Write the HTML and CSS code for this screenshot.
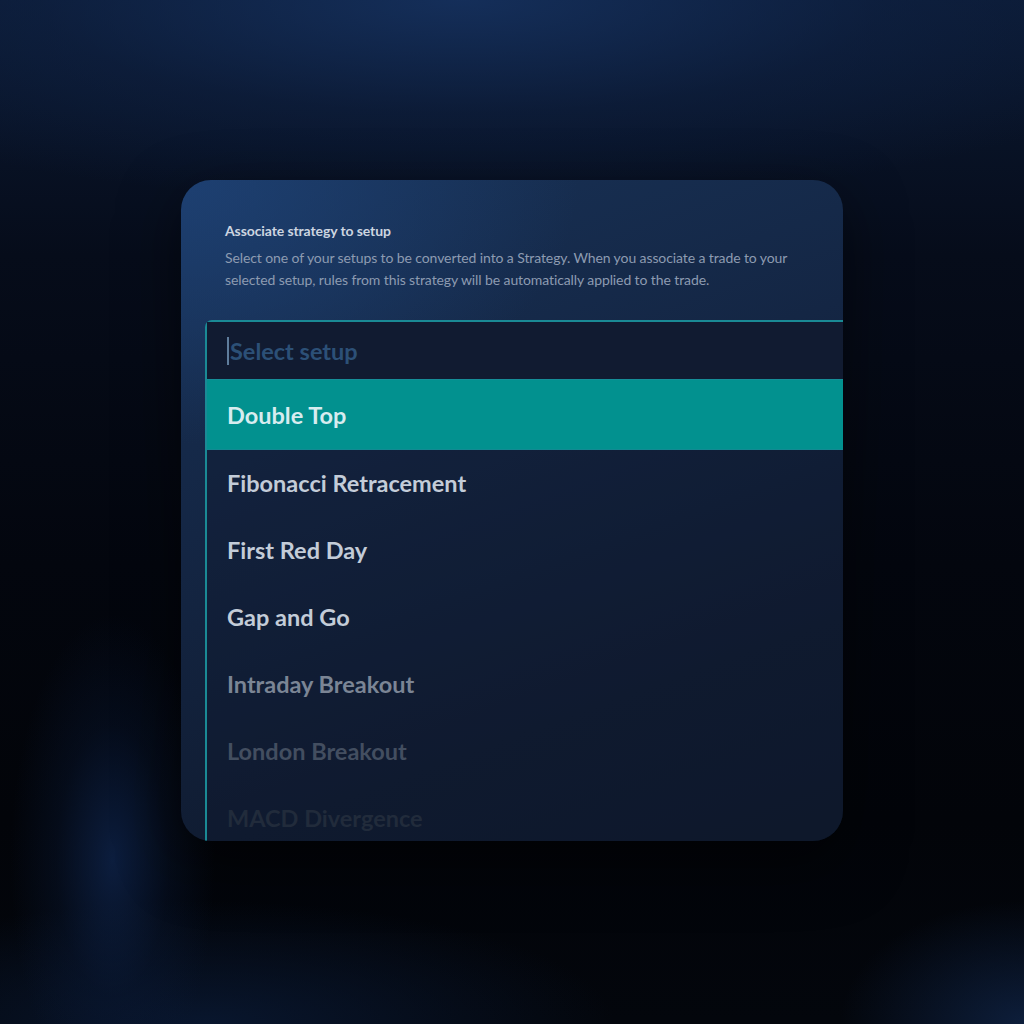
FILE: index.html
```html
<!DOCTYPE html>
<html lang="en">
<head>
<meta charset="utf-8">
<title>Associate strategy to setup</title>
<link rel="stylesheet" href="styles.css">
</head>
<body>
<div class="stage">
  <section class="card">
    <header class="intro">
      <h1 class="title">Associate strategy to setup</h1>
      <p class="desc">Select one of your setups to be converted into a Strategy. When you associate a trade to your selected setup, rules from this strategy will be automatically applied to the trade.</p>
    </header>
    <div class="select">
      <div class="select-input"><span class="caret"></span><span class="placeholder">Select setup</span></div>
      <ul class="options">
        <li class="option active">Double Top</li>
        <li class="option">Fibonacci Retracement</li>
        <li class="option">First Red Day</li>
        <li class="option">Gap and Go</li>
        <li class="option fade-1">Intraday Breakout</li>
        <li class="option fade-2">London Breakout</li>
        <li class="option fade-3">MACD Divergence</li>
      </ul>
    </div>
  </section>
</div>
</body>
</html>
```
FILE: styles.css
```css
* { box-sizing: border-box; }
html, body { margin: 0; padding: 0; }
body {
  width: 1024px;
  height: 1024px;
  overflow: hidden;
  font-family: "Source Sans Pro", Lato, "Noto Sans", sans-serif;
  background:
    radial-gradient(ellipse 75% 20% at 45% 0%, rgba(22, 50, 96, 0.85) 0%, rgba(16, 36, 72, 0.45) 55%, rgba(0,0,0,0) 100%),
    radial-gradient(ellipse 10% 24% at 11% 84%, rgba(16, 40, 84, 0.7) 0%, rgba(10, 26, 56, 0.35) 55%, rgba(0,0,0,0) 100%),
    radial-gradient(ellipse 40% 12% at 20% 100%, rgba(10, 26, 54, 0.8) 0%, rgba(0,0,0,0) 100%),
    radial-gradient(ellipse 18% 12% at 100% 100%, rgba(20, 46, 90, 0.6) 0%, rgba(0,0,0,0) 100%),
    linear-gradient(180deg, #0b1a34 0%, #060c1a 25%, #03060e 55%, #020409 80%, #03060c 100%);
}
.stage {
  display: flex;
  justify-content: flex-start;
  padding: 180px 0 0 181px;
}
.card {
  width: 662px;
  height: 661px;
  border-radius: 30px;
  overflow: hidden;
  padding: 41px 0 0 24px;
  background:
    radial-gradient(ellipse 60% 40% at 0% 0%, rgba(30, 66, 118, 0.85) 0%, rgba(0,0,0,0) 100%),
    linear-gradient(160deg, #183257 0%, #142644 40%, #101c32 75%, #0e192b 100%);
  box-shadow: 0 20px 60px rgba(0, 0, 0, 0.5);
}
.intro { padding-left: 20px; }
.title {
  margin: 0;
  font-size: 14px;
  line-height: 19px;
  font-weight: 700;
  color: #cdd5e0;
  letter-spacing: -0.1px;
}
.desc {
  margin: 7px 0 0;
  font-size: 14px;
  line-height: 22px;
  color: #8d9bb1;
  width: 580px;
  letter-spacing: -0.1px;
}
.select {
  margin-top: 29px;
  width: 700px;
  border: 2px solid #1a8a95;
  border-right: none;
  border-bottom: none;
  border-radius: 7px 0 0 0;
  background: rgba(14, 24, 44, 0.35);
}
.select-input {
  height: 58px;
  display: flex;
  align-items: center;
  padding-left: 20px;
  background: #111b31;
}
.caret {
  width: 2px;
  height: 28px;
  background: #5f7d9c;
  margin-right: 1px;
}
.placeholder {
  font-size: 23.5px;
  font-weight: 700;
  color: #2c5077;
}
.options {
  list-style: none;
  margin: 0;
  padding: 0;
}
.option {
  height: 67px;
  display: flex;
  align-items: center;
  padding-left: 20px;
  font-size: 23.5px;
  font-weight: 700;
  color: #c3ccd8;
}
.option.active {
  height: 69px;
  padding-top: 1px;
  background: #02918f;
  color: #d7ecef;
  box-shadow: 0 -1px 0 #158e98, 0 1px 0 #128a93;
}
.option.fade-1 { color: #7b8595; }
.option.fade-2 { color: #434e60; }
.option.fade-3 { color: #212b3b; }
```
